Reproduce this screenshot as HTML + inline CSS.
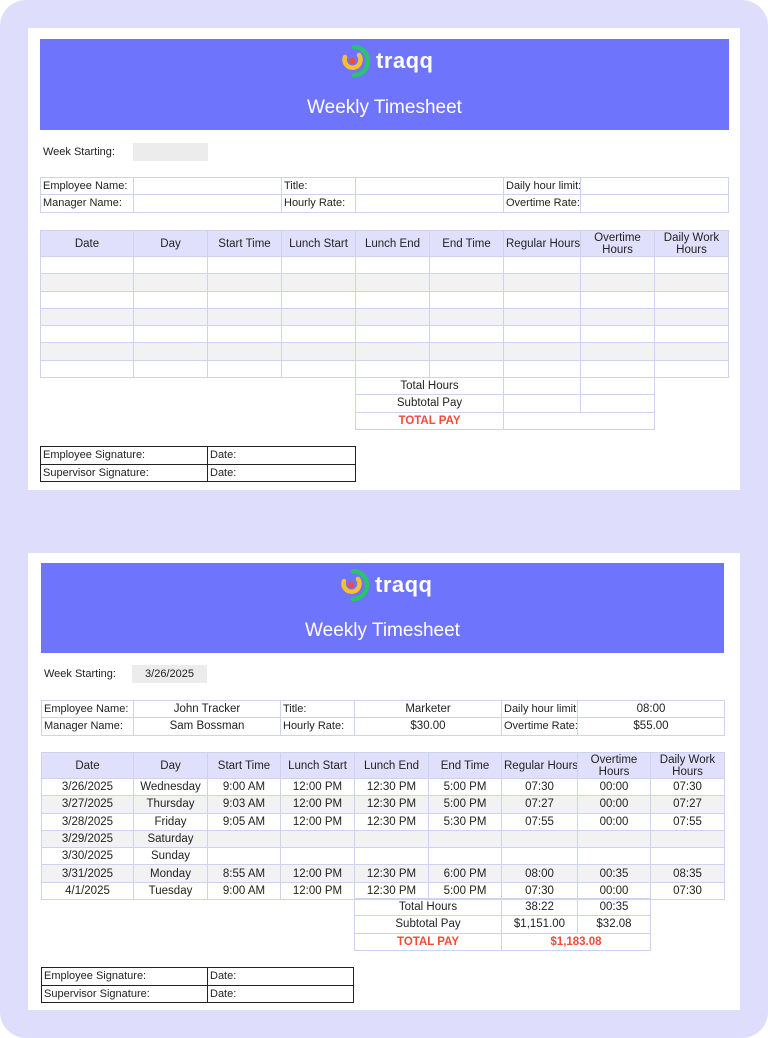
<!DOCTYPE html>
<html><head><meta charset="utf-8">
<style>
*{margin:0;padding:0;box-sizing:border-box}
body{width:768px;height:1038px;background:#fff;font-family:"Liberation Sans",sans-serif;color:#222;position:relative;overflow:hidden}
.bg{position:absolute;left:0;top:0;width:768px;height:1038px;background:#dedefc;border-radius:26px}
.card{position:absolute;background:#fff}
.ban{position:absolute;background:#6f74fc;color:#fff;text-align:center}
.ban .t{position:absolute;left:0;right:0;font-size:19px}
.logo{position:absolute;display:flex;align-items:center}
.logo span{font-size:22px;font-weight:bold;color:#fff;margin-left:5px;letter-spacing:0.5px}
table{position:absolute;border-collapse:collapse;table-layout:fixed;font-size:11.5px}
td{border:1px solid #cbd3f0;height:17.3px;text-align:center;white-space:nowrap;overflow:hidden;padding:0 2px;line-height:16px}
td.l{text-align:left;font-size:11px;padding:0 1px 0 2px}
tr.h td{background:#e0e0fc;height:26px;line-height:12px}
tr.g td{background:#f2f2f2}
.sig td{border:1px solid #222;text-align:left;height:17.5px;font-size:11px}
.red{color:#f24b3a;font-weight:bold}
.ws{position:absolute;font-size:11px}
.wsb{position:absolute;background:#ececec;font-size:11px;text-align:center;line-height:19px}
</style></head><body>
<div class="bg"></div>

<!-- CARD 1 -->
<div class="card" style="left:28px;top:28px;width:712px;height:462px"></div>
<div class="ban" style="left:40px;top:39px;width:689px;height:91px">
 <div class="logo" style="left:299px;top:5px">
  <svg width="32" height="34" viewBox="0 0 32 34"><path d="M15 3 A14 14 0 0 1 15 31" fill="none" stroke="#2bc36b" stroke-width="4.5" stroke-linecap="round"/><path d="M20 11 A8 8 0 1 1 6 13" fill="none" stroke="#f9c02c" stroke-width="4.5" stroke-linecap="round"/><circle cx="13" cy="17" r="3.2" fill="#f24b3a"/></svg>
  <span>traqq</span></div>
 <div class="t" style="top:58px">Weekly Timesheet</div>
</div>
<div class="ws" style="left:43px;top:146px">Week Starting:</div>
<div class="wsb" style="left:133px;top:143px;width:75px;height:18px"></div>
<table style="left:40px;top:177px;width:688px">
<col style="width:93px"><col style="width:148px"><col style="width:74px"><col style="width:148px"><col style="width:77px"><col style="width:148px">
<tr><td class="l">Employee Name:</td><td></td><td class="l">Title:</td><td></td><td class="l">Daily hour limit:</td><td></td></tr>
<tr><td class="l">Manager Name:</td><td></td><td class="l">Hourly Rate:</td><td></td><td class="l">Overtime Rate:</td><td></td></tr>
</table>
<table style="left:40px;top:230px;width:688px">
<col style="width:93px"><col style="width:74px"><col style="width:74px"><col style="width:74px"><col style="width:74px"><col style="width:74px"><col style="width:77px"><col style="width:74px"><col style="width:74px">
<tr class="h"><td>Date</td><td>Day</td><td>Start Time</td><td>Lunch Start</td><td>Lunch End</td><td>End Time</td><td>Regular Hours</td><td>Overtime<br>Hours</td><td>Daily Work<br>Hours</td></tr>
<tr><td></td><td></td><td></td><td></td><td></td><td></td><td></td><td></td><td></td></tr>
<tr class="g"><td></td><td></td><td></td><td></td><td></td><td></td><td></td><td></td><td></td></tr>
<tr><td></td><td></td><td></td><td></td><td></td><td></td><td></td><td></td><td></td></tr>
<tr class="g"><td></td><td></td><td></td><td></td><td></td><td></td><td></td><td></td><td></td></tr>
<tr><td></td><td></td><td></td><td></td><td></td><td></td><td></td><td></td><td></td></tr>
<tr class="g"><td></td><td></td><td></td><td></td><td></td><td></td><td></td><td></td><td></td></tr>
<tr><td></td><td></td><td></td><td></td><td></td><td></td><td></td><td></td><td></td></tr>
</table>
<table style="left:355px;top:377px;width:299px">
<col style="width:148px"><col style="width:77px"><col style="width:74px">
<tr><td>Total Hours</td><td></td><td></td></tr>
<tr><td>Subtotal Pay</td><td></td><td></td></tr>
<tr><td class="red">TOTAL PAY</td><td colspan="2" class="red"></td></tr>
</table>
<table class="sig" style="left:40px;top:446px;width:315px">
<col style="width:167px"><col style="width:148px">
<tr><td>Employee Signature:</td><td>Date:</td></tr>
<tr><td>Supervisor Signature:</td><td>Date:</td></tr>
</table>

<!-- CARD 2 -->
<div class="card" style="left:28px;top:553px;width:712px;height:457px"></div>
<div class="ban" style="left:41px;top:563px;width:683px;height:90px">
 <div class="logo" style="left:297px;top:5px">
  <svg width="32" height="34" viewBox="0 0 32 34"><path d="M15 3 A14 14 0 0 1 15 31" fill="none" stroke="#2bc36b" stroke-width="4.5" stroke-linecap="round"/><path d="M20 11 A8 8 0 1 1 6 13" fill="none" stroke="#f9c02c" stroke-width="4.5" stroke-linecap="round"/><circle cx="13" cy="17" r="3.2" fill="#f24b3a"/></svg>
  <span>traqq</span></div>
 <div class="t" style="top:57px">Weekly Timesheet</div>
</div>
<div class="ws" style="left:44px;top:668px">Week Starting:</div>
<div class="wsb" style="left:132px;top:665px;width:75px;height:18px">3/26/2025</div>
<table style="left:41px;top:700px;width:683px">
<col style="width:92px"><col style="width:147px"><col style="width:74px"><col style="width:147px"><col style="width:76px"><col style="width:147px">
<tr><td class="l">Employee Name:</td><td>John Tracker</td><td class="l">Title:</td><td>Marketer</td><td class="l">Daily hour limit:</td><td>08:00</td></tr>
<tr><td class="l">Manager Name:</td><td>Sam Bossman</td><td class="l">Hourly Rate:</td><td>$30.00</td><td class="l">Overtime Rate:</td><td>$55.00</td></tr>
</table>
<table style="left:41px;top:752px;width:683px">
<col style="width:92px"><col style="width:74px"><col style="width:73px"><col style="width:74px"><col style="width:74px"><col style="width:73px"><col style="width:76px"><col style="width:73px"><col style="width:74px">
<tr class="h"><td>Date</td><td>Day</td><td>Start Time</td><td>Lunch Start</td><td>Lunch End</td><td>End Time</td><td>Regular Hours</td><td>Overtime<br>Hours</td><td>Daily Work<br>Hours</td></tr>
<tr><td>3/26/2025</td><td>Wednesday</td><td>9:00 AM</td><td>12:00 PM</td><td>12:30 PM</td><td>5:00 PM</td><td>07:30</td><td>00:00</td><td>07:30</td></tr>
<tr class="g"><td>3/27/2025</td><td>Thursday</td><td>9:03 AM</td><td>12:00 PM</td><td>12:30 PM</td><td>5:00 PM</td><td>07:27</td><td>00:00</td><td>07:27</td></tr>
<tr><td>3/28/2025</td><td>Friday</td><td>9:05 AM</td><td>12:00 PM</td><td>12:30 PM</td><td>5:30 PM</td><td>07:55</td><td>00:00</td><td>07:55</td></tr>
<tr class="g"><td>3/29/2025</td><td>Saturday</td><td></td><td></td><td></td><td></td><td></td><td></td><td></td></tr>
<tr><td>3/30/2025</td><td>Sunday</td><td></td><td></td><td></td><td></td><td></td><td></td><td></td></tr>
<tr class="g"><td>3/31/2025</td><td>Monday</td><td>8:55 AM</td><td>12:00 PM</td><td>12:30 PM</td><td>6:00 PM</td><td>08:00</td><td>00:35</td><td>08:35</td></tr>
<tr><td>4/1/2025</td><td>Tuesday</td><td>9:00 AM</td><td>12:00 PM</td><td>12:30 PM</td><td>5:00 PM</td><td>07:30</td><td>00:00</td><td>07:30</td></tr>
</table>
<table style="left:354px;top:898px;width:296px">
<col style="width:147px"><col style="width:76px"><col style="width:73px">
<tr><td>Total Hours</td><td>38:22</td><td>00:35</td></tr>
<tr><td>Subtotal Pay</td><td>$1,151.00</td><td>$32.08</td></tr>
<tr><td class="red">TOTAL PAY</td><td colspan="2" class="red">$1,183.08</td></tr>
</table>
<table class="sig" style="left:41px;top:967px;width:312px">
<col style="width:166px"><col style="width:146px">
<tr><td>Employee Signature:</td><td>Date:</td></tr>
<tr><td>Supervisor Signature:</td><td>Date:</td></tr>
</table>
</body></html>
